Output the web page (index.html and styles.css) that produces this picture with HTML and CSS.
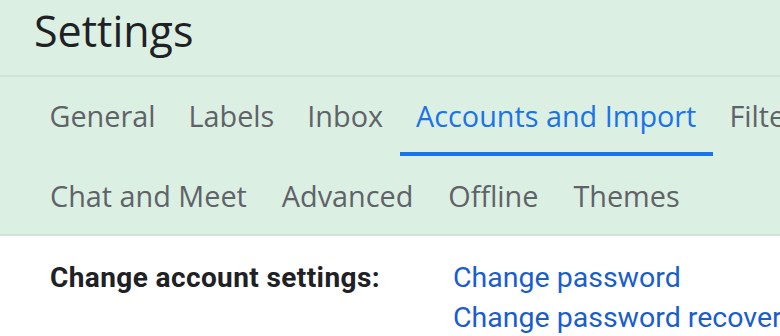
FILE: index.html
```html
<!DOCTYPE html>
<html lang="en">
<head>
    <meta charset="UTF-8">
    <meta name="viewport" content="width=device-width, initial-scale=1.0">
    <title>Settings</title>
    <link rel="stylesheet" href="styles.css">
</head>
<body>
    <header class="top">
        <h1 class="title">Settings</h1>
    </header>

    <!-- tab bar -->
    <nav class="tabs">
        <div class="tab-row">
            <a class="tab" href="#">General</a>
            <a class="tab" href="#">Labels</a>
            <a class="tab" href="#">Inbox</a>
            <a class="tab active" href="#">Accounts and Import</a>
            <a class="tab" href="#">Filters and Blocked Addresses</a>
        </div>
        <div class="tab-row">
            <a class="tab" href="#">Chat and Meet</a>
            <a class="tab" href="#">Advanced</a>
            <a class="tab" href="#">Offline</a>
            <a class="tab" href="#">Themes</a>
        </div>
    </nav>

    <main class="content">
        <div class="setting">
            <div class="setting-label">Change account settings:</div>
            <div class="setting-links">
                <a href="#">Change password</a>
                <a href="#">Change password recovery options</a>
            </div>
        </div>
    </main>
</body>
</html>
```

FILE: styles.css
```css
body {
    margin: 0;
    font-family: "Open Sans", Roboto, Arial, sans-serif;
    background-color: #fff;
    overflow: hidden;
    width: 780px;
}

.top {
    background-color: #dcefe3;
    height: 77px;
    border-bottom: 2px solid #cfe3d8;
    box-sizing: border-box;
    padding-left: 34px;
}

.title {
    margin: 0;
    font-weight: 400;
    font-size: 43px;
    line-height: 62px;
    color: #202124;
}

.tabs {
    background-color: #dcefe3;
    padding-left: 33px;
    border-bottom: 2px solid #cfe3d8;
}

.tab-row {
    display: flex;
    white-space: nowrap;
    overflow: hidden;
}

.tab {
    display: block;
    flex-shrink: 0;
    padding: 0 16.5px;
    height: 79px;
    line-height: 78px;
    font-size: 28.8px;
    color: #5f6368;
    text-decoration: none;
    box-sizing: border-box;
}

/* second row sits a bit wider */
.tab-row + .tab-row {
    padding-left: 0.5px;
}

.tab-row + .tab-row .tab {
    padding: 0 17.5px 0 16.5px;
    height: 78px;
    line-height: 79px;
}

.tab-row + .tab-row .tab + .tab {
    padding-left: 17.5px;
}

.tab.active {
    color: #1a73e8;
    border-bottom: 4px solid #1a73e8;
}

.content {
    padding: 22px 0 0 50px;
}

.setting {
    display: flex;
}

.setting-label {
    flex-shrink: 0;
    width: 403px;
    font-family: Roboto, Arial, sans-serif;
    font-weight: 700;
    font-size: 28px;
    letter-spacing: 0.4px;
    line-height: 40px;
    color: #202124;
}

.setting-links {
    display: flex;
    flex-direction: column;
    min-width: 0;
    overflow: hidden;
    white-space: nowrap;
}

.setting-links a {
    font-family: Roboto, Arial, sans-serif;
    font-size: 28.5px;
    line-height: 40px;
    color: #1a5dcd;
    text-decoration: none;
}
```
